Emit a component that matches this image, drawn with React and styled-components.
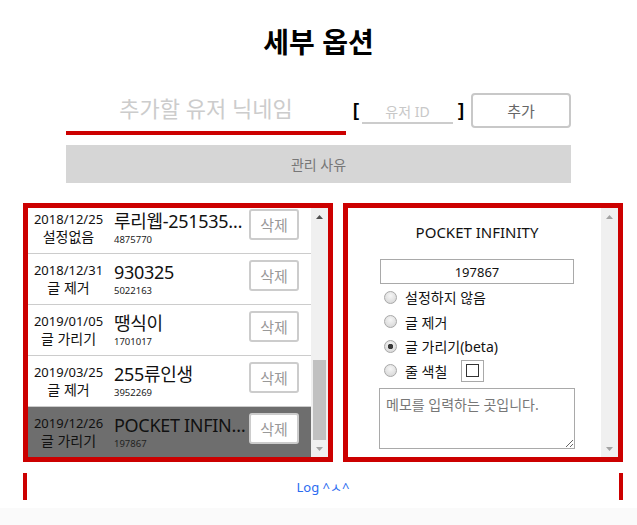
import React, { useLayoutEffect, useRef } from "react";
import styled, { createGlobalStyle } from "styled-components";

const RED = "#cc0000";
const FONT = `"Noto Sans", "Noto Sans CJK KR", sans-serif`;

const GlobalStyle = createGlobalStyle`
  html, body { margin: 0; padding: 0; background: #fff; }
  body { font-family: ${FONT}; color: #000; }
  * { box-sizing: border-box; }
`;

const Page = styled.div`
  width: 637px;
`;

const TopSection = styled.div`
  width: 505px;
  margin: 0 auto;
`;

const Title = styled.h1`
  margin: 22px 0 0;
  height: 40px;
  line-height: 40px;
  font-size: 28px;
  font-weight: 700;
  text-align: center;
`;

const InputRow = styled.div`
  display: flex;
  align-items: flex-start;
  margin-top: 28px;
`;

const NickInput = styled.input`
  width: 280px;
  height: 45px;
  border: none;
  border-bottom: 4px solid ${RED};
  padding: 0 0 6px;
  font-family: ${FONT};
  font-size: 22px;
  text-align: center;
  outline: none;
  &::placeholder { color: #cccccc; }
`;

const Bracket = styled.span`
  font-family: "Liberation Sans", sans-serif;
  font-size: 18px;
  font-weight: 700;
  line-height: 18px;
  margin-top: 11px;
  margin-left: ${(p) => p.$gap}px;
`;

const IdInput = styled.input`
  width: 91px;
  height: 24px;
  margin: 10px 0 0 3px;
  border: none;
  border-bottom: 2px solid #cccccc;
  padding: 0;
  font-family: ${FONT};
  font-size: 14px;
  text-align: center;
  outline: none;
  &::placeholder { color: #c8c8c8; }
`;

const AddButton = styled.button`
  width: 100px;
  height: 35px;
  margin: 3px 0 0 auto;
  background: #fff;
  border: 2px solid #c8c8c8;
  border-radius: 4px;
  font-family: ${FONT};
  font-size: 15px;
  color: #666;
`;

const ReasonInput = styled.input`
  display: block;
  width: 100%;
  height: 38px;
  margin-top: 10px;
  border: none;
  background: #d6d6d6;
  font-family: ${FONT};
  font-size: 14px;
  text-align: center;
  outline: none;
  &::placeholder { color: #777; }
`;

const Panels = styled.div`
  display: flex;
  gap: 10px;
  width: 600px;
  margin: 20px 0 0 23px;
`;

const Panel = styled.div`
  display: flex;
  width: ${(p) => p.$w}px;
  height: 259px;
  border: 5px solid ${RED};
`;

const List = styled.div`
  flex: 1;
  min-width: 0;
  overflow: hidden;
`;

const Row = styled.div`
  display: flex;
  align-items: flex-start;
  height: 51px;
  border-bottom: 1px solid #cccccc;
  background: ${(p) => (p.$selected ? "#6e6e6e" : "#fff")};
  &:last-child { height: 50px; border-bottom: none; }
`;

const DateCol = styled.div`
  width: 81px;
  padding-top: 8px;
  text-align: center;
  color: #111;
`;

const DateText = styled.div`
  font-size: 13px;
  line-height: 17px;
`;

const StatusText = styled.div`
  font-size: 14px;
  line-height: 17px;
`;

const NameCol = styled.div`
  width: 134px;
  margin-left: 5px;
  padding-top: 6px;
  color: #111;
`;

const NameText = styled.div`
  font-size: 18px;
  line-height: 24px;
  letter-spacing: -0.3px;
  white-space: nowrap;
  overflow: hidden;
  text-overflow: ellipsis;
`;

const IdText = styled.div`
  font-size: 9.5px;
  line-height: 12px;
  margin-top: 1px;
  color: #222;
`;

const DeleteButton = styled.button`
  flex: none;
  width: 50px;
  height: 31px;
  margin: 6px 12px 0 auto;
  padding: 0;
  background: #fff;
  border: 2px solid #cccccc;
  border-radius: 3px;
  font-family: ${FONT};
  font-size: 15px;
  color: #999;
`;

/* drawn vertical scrollbar (classic style) */
const ScrollBar = styled.div`
  flex: none;
  width: 17px;
  display: flex;
  flex-direction: column;
  background: #f0f0f0;
`;

const ArrowButton = styled.div`
  height: 17px;
  display: flex;
  align-items: center;
  justify-content: center;
`;

const ThumbArea = styled.div`
  flex: 1;
  display: flex;
  flex-direction: column;
  justify-content: flex-end;
  padding: 0 2px;
`;

const Thumb = styled.div`
  height: ${(p) => p.$h}px;
  background: #c1c1c1;
`;

const Arrow = ({ dir, color }) => (
  <svg width="7" height="4" viewBox="0 0 7 4">
    <polygon
      points={dir === "up" ? "0,4 3.5,0 7,4" : "0,0 3.5,4 7,0"}
      fill={color}
    />
  </svg>
);

const Detail = styled.div`
  flex: 1;
  min-width: 0;
  overflow: hidden;
  display: flex;
  flex-direction: column;
  align-items: center;
  padding-left: 5px;
`;

const DetailTitle = styled.div`
  margin-top: 13px;
  font-size: 15px;
  line-height: 22px;
  color: #111;
`;

const IdBox = styled.input`
  width: 194px;
  height: 25px;
  margin-top: 16px;
  border: 1px solid #a9a9a9;
  padding: 0;
  font-family: ${FONT};
  font-size: 13px;
  text-align: center;
  color: #111;
  outline: none;
`;

const Options = styled.div`
  width: 196px;
  margin-top: 1px;
`;

const Option = styled.label`
  display: flex;
  align-items: center;
  height: 24.5px;
  font-size: 14px;
  color: #111;
`;

const Radio = styled.input.attrs({ type: "radio", name: "mode" })`
  appearance: none;
  width: 13px;
  height: 13px;
  margin: 0 8px 0 5px;
  border-radius: 50%;
  border: 1px solid #a8a8a8;
  background: radial-gradient(circle at 50% 35%, #f6f6f6, #d2d2d2);
  &:checked {
    background: radial-gradient(circle, #3a3a3a 0 2.5px, transparent 3px),
      radial-gradient(circle at 50% 35%, #f6f6f6, #d2d2d2);
  }
`;

const Swatch = styled.span`
  display: inline-flex;
  align-items: center;
  justify-content: center;
  width: 23px;
  height: 22px;
  margin-left: 14px;
  border: 1px solid #a9a9a9;
`;

const SwatchInner = styled.span`
  width: 13px;
  height: 13px;
  border: 1px solid #333;
  background: #fff;
`;

const Memo = styled.textarea`
  width: 196px;
  height: 61px;
  margin-top: 5px;
  border: 1px solid #a9a9a9;
  padding: 5px 6px;
  font-family: ${FONT};
  font-size: 14px;
  outline: none;
  &::placeholder { color: #777; }
`;

const Footer = styled.div`
  display: flex;
  align-items: center;
  justify-content: center;
  width: 600px;
  height: 27px;
  margin: 11px 0 0 23px;
  border-left: 4px solid ${RED};
  border-right: 4px solid ${RED};
  font-size: 13px;
  color: #2b6cf0;
`;

const BottomStrip = styled.div`
  height: 17px;
  margin-top: 8px;
  background: #fafafa;
`;

const rows = [
  { date: "2018/12/25", status: "설정없음", name: "루리웹-2515355698", id: "4875770" },
  { date: "2018/12/31", status: "글 제거", name: "930325", id: "5022163" },
  { date: "2019/01/05", status: "글 가리기", name: "땡식이", id: "1701017" },
  { date: "2019/03/25", status: "글 제거", name: "255류인생", id: "3952269" },
  { date: "2019/12/26", status: "글 가리기", name: "POCKET INFINITY", id: "197867", selected: true },
];

export default function App() {
  const listRef = useRef(null);
  useLayoutEffect(() => {
    if (listRef.current) listRef.current.scrollTop = listRef.current.scrollHeight;
  }, []);

  return (
    <Page>
      <GlobalStyle />
      <TopSection>
        <Title>세부 옵션</Title>
        <InputRow>
          <NickInput placeholder="추가할 유저 닉네임" />
          <Bracket $gap={7}>[</Bracket>
          <IdInput placeholder="유저 ID" />
          <Bracket $gap={5}>]</Bracket>
          <AddButton>추가</AddButton>
        </InputRow>
        <ReasonInput placeholder="관리 사유" />
      </TopSection>

      <Panels>
        <Panel $w={310}>
          <List ref={listRef}>
            {rows.map((r) => (
              <Row key={r.id} $selected={r.selected}>
                <DateCol>
                  <DateText>{r.date}</DateText>
                  <StatusText>{r.status}</StatusText>
                </DateCol>
                <NameCol>
                  <NameText>{r.name}</NameText>
                  <IdText>{r.id}</IdText>
                </NameCol>
                <DeleteButton>삭제</DeleteButton>
              </Row>
            ))}
          </List>
          <ScrollBar>
            <ArrowButton><Arrow dir="up" color="#505050" /></ArrowButton>
            <ThumbArea><Thumb $h={80} /></ThumbArea>
            <ArrowButton><Arrow dir="down" color="#a3a3a3" /></ArrowButton>
          </ScrollBar>
        </Panel>
        <Panel $w={280}>
          <Detail>
            <DetailTitle>POCKET INFINITY</DetailTitle>
            <IdBox defaultValue="197867" />
            <Options>
              <Option><Radio />설정하지 않음</Option>
              <Option><Radio />글 제거</Option>
              <Option><Radio defaultChecked />글 가리기(beta)</Option>
              <Option>
                <Radio />줄 색칠
                <Swatch><SwatchInner /></Swatch>
              </Option>
            </Options>
            <Memo placeholder="메모를 입력하는 곳입니다." />
          </Detail>
          <ScrollBar>
            <ArrowButton><Arrow dir="up" color="#a3a3a3" /></ArrowButton>
            <ThumbArea />
            <ArrowButton><Arrow dir="down" color="#a3a3a3" /></ArrowButton>
          </ScrollBar>
        </Panel>
      </Panels>

      <Footer>Log ^ㅅ^</Footer>
      <BottomStrip />
    </Page>
  );
}
